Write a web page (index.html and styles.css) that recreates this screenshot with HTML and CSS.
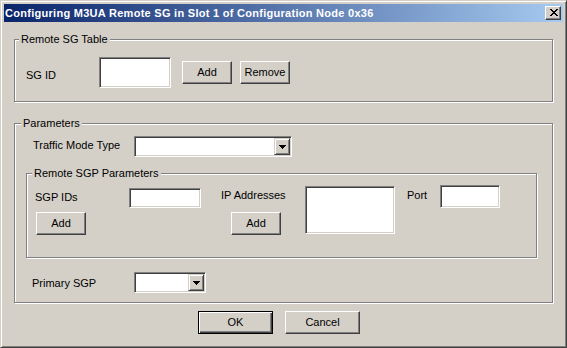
FILE: index.html
```html
<!DOCTYPE html>
<html lang="en">
<head>
    <meta charset="UTF-8">
    <title>Configuring M3UA Remote SG</title>
    <link rel="stylesheet" href="styles.css">
</head>
<body>
    <div class="window">
        <!-- Title bar -->
        <div class="titlebar">
            <span class="title">Configuring M3UA Remote SG in Slot 1 of Configuration Node 0x36</span>
            <button class="close-btn" title="Close">
                <svg width="8" height="7" viewBox="0 0 8 7" shape-rendering="crispEdges">
                    <path fill="#000" d="M0 0h2v1H0z M6 0h2v1H6z M1 1h2v1H1z M5 1h2v1H5z M2 2h4v1H2z M3 3h2v1H3z M2 4h4v1H2z M1 5h2v1H1z M5 5h2v1H5z M0 6h2v1H0z M6 6h2v1H6z"/>
                </svg>
            </button>
        </div>

        <div class="dialog-body">
            <!-- Remote SG Table -->
            <div class="group group-table">
                <div class="group-label">Remote SG Table</div>
                <div class="sg-row">
                    <span class="label sg-label">SG ID</span>
                    <div class="textbox sg-input"></div>
                    <button class="btn add-sg">Add</button>
                    <button class="btn remove-sg">Remove</button>
                </div>
            </div>

            <!-- Parameters -->
            <div class="group group-params">
                <div class="group-label">Parameters</div>
                <div class="traffic-row">
                    <span class="label traffic-label">Traffic Mode Type</span>
                    <div class="combo traffic-combo">
                        <span class="combo-btn">
                            <svg width="7" height="4" viewBox="0 0 7 4" shape-rendering="crispEdges">
                                <path fill="#000" d="M0 0h7v1H0z M1 1h5v1H1z M2 2h3v1H2z M3 3h1v1H3z"/>
                            </svg>
                        </span>
                    </div>
                </div>

                <div class="group group-sgp">
                    <div class="group-label">Remote SGP Parameters</div>
                    <div class="sgp-body">
                        <div class="sgp-col">
                            <div class="sgp-ids">
                                <span class="label sgp-label">SGP IDs</span>
                                <div class="textbox sgp-input"></div>
                            </div>
                            <button class="btn add-sgp">Add</button>
                        </div>
                        <div class="ip-col">
                            <div class="ip-side">
                                <span class="label ip-label">IP Addresses</span>
                                <button class="btn add-ip">Add</button>
                            </div>
                            <div class="textbox ip-list"></div>
                        </div>
                        <div class="port-col">
                            <span class="label port-label">Port</span>
                            <div class="textbox port-input"></div>
                        </div>
                    </div>
                </div>

                <div class="primary-row">
                    <span class="label primary-label">Primary SGP</span>
                    <div class="combo primary-combo">
                        <span class="combo-btn">
                            <svg width="7" height="4" viewBox="0 0 7 4" shape-rendering="crispEdges">
                                <path fill="#000" d="M0 0h7v1H0z M1 1h5v1H1z M2 2h3v1H2z M3 3h1v1H3z"/>
                            </svg>
                        </span>
                    </div>
                </div>
            </div>

            <!-- Dialog buttons -->
            <div class="dialog-buttons">
                <button class="btn btn-default">OK</button>
                <button class="btn cancel-btn">Cancel</button>
            </div>
        </div>
    </div>
</body>
</html>
```

FILE: styles.css
```css
* {
    margin: 0;
    padding: 0;
    box-sizing: border-box;
}

html, body {
    background: #d4d0c8;
}

body {
    font-family: "Liberation Sans", Arial, sans-serif;
    font-size: 11px;
    line-height: 13px;
    color: #000;
}

.window {
    width: 567px;
    height: 348px;
    padding: 3px;
    background: #d4d0c8;
    border: 1px solid;
    border-color: #d4d0c8 #404040 #404040 #d4d0c8;
    box-shadow: inset 1px 1px #fff, inset -1px -1px #808080;
}

/* Title bar */
.titlebar {
    height: 18px;
    display: flex;
    align-items: center;
    justify-content: space-between;
    padding: 0 2px 0 1px;
    background: linear-gradient(to right, #0a246a, #a6caf0);
}

.title {
    color: #fff;
    font-weight: bold;
    font-size: 11px;
    letter-spacing: 0.28px;
    white-space: nowrap;
}

.close-btn {
    width: 16px;
    height: 14px;
    display: flex;
    align-items: center;
    justify-content: center;
    background: #d4d0c8;
    border: 1px solid;
    border-color: #fff #404040 #404040 #fff;
    box-shadow: inset -1px -1px #808080;
    padding: 0 0 1px 1px;
}

.close-btn svg {
    display: block;
}

.dialog-body {
    display: flow-root;
}

/* Group boxes */
.group {
    border: 1px solid #808080;
    box-shadow: inset 1px 1px #fff, 1px 1px #fff;
}

.group-label {
    display: block;
    width: fit-content;
    margin: -7px 0 0 4px;
    padding: 0 2px;
    background: #d4d0c8;
    white-space: nowrap;
}

.label {
    display: block;
    white-space: nowrap;
}

/* Controls */
.textbox {
    background: #fff;
    border: 1px solid;
    border-color: #808080 #fff #fff #808080;
    box-shadow: inset 1px 1px #404040, inset -1px -1px #d4d0c8;
}

.btn {
    display: flex;
    align-items: center;
    justify-content: center;
    width: 50px;
    height: 23px;
    padding: 0 0 1px;
    font-family: inherit;
    font-size: 11px;
    color: #000;
    background: #d4d0c8;
    border: 1px solid;
    border-color: #fff #404040 #404040 #fff;
    box-shadow: inset -1px -1px #808080;
}

.btn-default {
    border-color: #000;
    box-shadow: inset 1px 1px #fff, inset -1px -1px #404040, inset -2px -2px #808080;
}

.combo {
    display: flex;
    justify-content: flex-end;
    padding: 1px;
    background: #fff;
    border: 1px solid;
    border-color: #808080 #fff #fff #808080;
    box-shadow: inset 1px 1px #404040, inset -1px -1px #d4d0c8;
}

.combo-btn {
    width: 16px;
    height: 100%;
    display: flex;
    align-items: center;
    justify-content: center;
    padding-left: 1px;
    background: #d4d0c8;
    border: 1px solid;
    border-color: #d4d0c8 #404040 #404040 #d4d0c8;
    box-shadow: inset 1px 1px #fff, inset -1px -1px #808080;
}

.combo-btn svg {
    display: block;
}

/* Remote SG Table */
.group-table {
    width: 539px;
    height: 63px;
    margin: 17px 0 0 10px;
}

.sg-row {
    display: flex;
    align-items: flex-start;
    margin-top: 11px;
}

.sg-label {
    width: 73px;
    margin: 12px 0 0 11px;
}

.sg-input {
    width: 72px;
    height: 31px;
}

.add-sg {
    margin: 4px 0 0 11px;
}

.remove-sg {
    margin: 4px 0 0 8px;
}

/* Parameters */
.group-params {
    width: 539px;
    height: 180px;
    margin: 21px 0 0 10px;
}

.group-params .group-label {
    margin-left: 6px;
}

.traffic-row {
    display: flex;
    align-items: flex-start;
    margin-top: 6px;
}

.traffic-label {
    width: 101px;
    margin: 3px 0 0 18px;
}

.traffic-combo {
    width: 158px;
    height: 21px;
}

/* Remote SGP Parameters */
.group-sgp {
    width: 511px;
    height: 85px;
    margin: 16px 0 0 11px;
}

.group-sgp .group-label {
    margin-left: 5px;
}

.sgp-body {
    display: flex;
    align-items: flex-start;
}

.sgp-col {
    margin-left: 8px;
}

.sgp-ids {
    display: flex;
    align-items: flex-start;
}

.sgp-label {
    width: 94px;
    margin-top: 11px;
}

.sgp-input {
    width: 72px;
    height: 20px;
    margin-top: 8px;
}

.add-sgp {
    margin: 4px 0 0 1px;
}

.ip-col {
    display: flex;
    align-items: flex-start;
    margin-left: 11px;
}

.ip-side {
    width: 93px;
}

.ip-label {
    margin: 9px 0 0 9px;
}

.add-ip {
    margin: 10px 0 0 19px;
}

.ip-list {
    width: 90px;
    height: 48px;
    margin-top: 6px;
}

.port-col {
    display: flex;
    align-items: flex-start;
}

.port-label {
    width: 33px;
    margin: 9px 0 0 12px;
}

.port-input {
    width: 60px;
    height: 23px;
    margin-top: 5px;
}

.primary-row {
    display: flex;
    align-items: flex-start;
    margin-top: 14px;
}

.primary-label {
    width: 102px;
    margin: 5px 0 0 17px;
}

.primary-combo {
    width: 72px;
    height: 21px;
}

/* OK / Cancel */
.dialog-buttons {
    display: flex;
    margin: 8px 0 0 194px;
}

.dialog-buttons .btn {
    width: 75px;
}

.cancel-btn {
    margin-left: 12px;
}
```
